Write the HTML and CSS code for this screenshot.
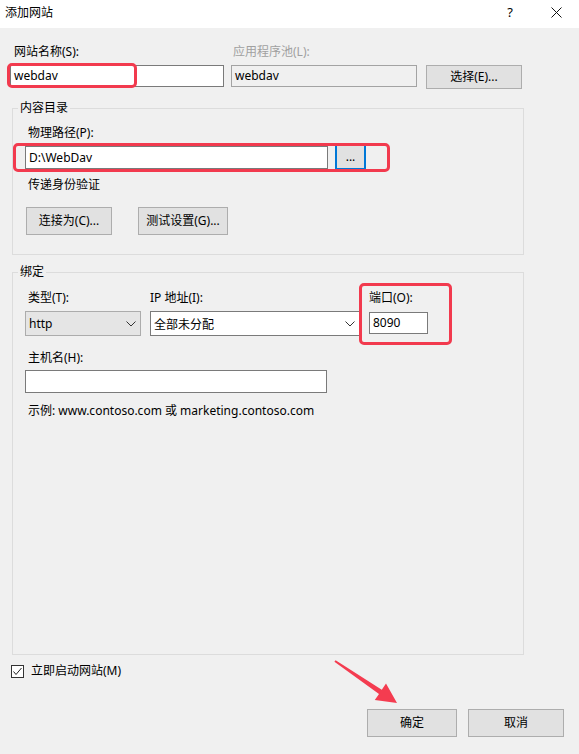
FILE: index.html
```html
<!DOCTYPE html>
<html lang="zh-CN">
<head>
<meta charset="utf-8">
<title>添加网站</title>
<link rel="stylesheet" href="styles.css">
</head>
<body>
<div class="window">
  <div class="titlebar">
    <span class="title">添加网站</span>
    <span class="tb-btn help">?</span>
    <span class="tb-btn close">
      <svg width="11" height="11" viewBox="0 0 11 11"><path d="M0.5 0.5 L10.5 10.5 M10.5 0.5 L0.5 10.5" stroke="#111" stroke-width="1" fill="none"/></svg>
    </span>
  </div>
  <div class="body">
    <div class="site-row">
      <div class="lbl lbl-name">网站名称(S):</div>
      <div class="lbl lbl-pool">应用程序池(L):</div>
      <div></div>
      <div class="input w-name">webdav</div>
      <div class="input input-disabled w-pool">webdav</div>
      <button class="btn btn-select">选择(E)...</button>
    </div>

    <fieldset class="group group-content">
      <legend>内容目录</legend>
      <div class="group-inner">
        <div class="lbl indent path-lbl">物理路径(P):</div>
        <div class="path-row">
          <div class="input w-path">D:\WebDav</div>
          <button class="btn btn-browse">...</button>
        </div>
        <div class="lbl indent pass-lbl">传递身份验证</div>
        <div class="btn-row">
          <button class="btn btn-connect">连接为(C)...</button>
          <button class="btn btn-test">测试设置(G)...</button>
        </div>
      </div>
    </fieldset>

    <fieldset class="group group-binding">
      <legend>绑定</legend>
      <div class="group-inner">
        <div class="binding-grid">
          <div class="lbl indent">类型(T):</div>
          <div class="lbl">IP 地址(I):</div>
          <div class="lbl">端口(O):</div>
          <div class="select select-gray"><span>http</span>
            <svg class="chev" width="10" height="6" viewBox="0 0 10 6"><path d="M0.5 0.5 L5 5 L9.5 0.5" stroke="#333" fill="none"/></svg>
          </div>
          <div class="select"><span>全部未分配</span>
            <svg class="chev" width="10" height="6" viewBox="0 0 10 6"><path d="M0.5 0.5 L5 5 L9.5 0.5" stroke="#333" fill="none"/></svg>
          </div>
          <div class="input w-port">8090</div>
        </div>
        <div class="lbl indent host-lbl">主机名(H):</div>
        <div class="input w-host"></div>
        <div class="lbl indent example">示例: www.contoso.com 或 marketing.contoso.com</div>
      </div>
    </fieldset>

    <div class="check-row">
      <span class="checkbox">
        <svg width="11" height="11" viewBox="0 0 11 11"><path d="M1.5 5.5 L4 8.5 L9.5 2" stroke="#222" stroke-width="1" fill="none"/></svg>
      </span>
      <span class="check-lbl">立即启动网站(M)</span>
    </div>

    <div class="footer">
      <button class="btn btn-ok">确定</button>
      <button class="btn btn-cancel">取消</button>
    </div>
  </div>

  <div class="mark mark-name"></div>
  <div class="mark mark-path"></div>
  <div class="mark mark-port"></div>
  <svg class="arrow" width="579" height="754" viewBox="0 0 579 754">
    <polygon points="335.6,660.2 381.8,689.7 386.0,683.5 397,703 374.8,700.1 379.0,693.9 334.4,661.8" fill="#f43c50"/>
  </svg>
</div>
</body>
</html>
```

FILE: styles.css
```css
* { box-sizing: border-box; }

html, body {
  margin: 0;
  padding: 0;
}

body {
  width: 579px;
  height: 754px;
  overflow: hidden;
  background: #f0f0f0;
  font-family: "Noto Sans", "Noto Sans CJK SC", sans-serif;
  font-size: 12px;
  color: #000;
}

.window {
  position: relative;
  width: 579px;
  height: 754px;
}

.titlebar {
  height: 28px;
  background: #fff;
  display: flex;
  align-items: center;
  padding-left: 5px;
}

.title {
  flex: 1;
  line-height: 16px;
  margin-top: -2px;
}

.tb-btn {
  width: 46px;
  height: 28px;
  display: flex;
  align-items: center;
  justify-content: center;
}

.help {
  font-size: 13px;
  margin-top: -4px;
}

.close {
  margin-top: -4px;
}

.body {
  padding-left: 10px;
}

.lbl {
  line-height: 16px;
  white-space: nowrap;
}

.indent { padding-left: 3px; }

.site-row {
  margin-top: 16px;
  display: grid;
  grid-template-columns: 214px 186px 98px;
  grid-template-rows: 16px auto;
  column-gap: 7px;
  row-gap: 5px;
  align-items: start;
}

.lbl-name { padding-left: 4px; }
.lbl-pool { padding-left: 2px; color: #a0a0a0; }

.input {
  height: 22px;
  border: 1px solid #7a7a7a;
  background: #fff;
  padding-left: 3px;
  line-height: 20px;
  white-space: nowrap;
}

.input-disabled {
  border-color: #a3a3a3;
  background: #f0f0f0;
}

.btn {
  font: inherit;
  color: #000;
  background: #e1e1e1;
  border: 1px solid #adadad;
  padding: 0;
  margin: 0;
  line-height: 16px;
  text-align: center;
}

.btn-select {
  width: 96px;
  height: 24px;
  margin-left: 2px;
}

.group {
  margin: 0;
  border: 1px solid #dcdcdc;
  padding: 0;
  width: 512px;
  margin-left: 2px;
  min-width: 0;
}

.group legend {
  padding: 0 2px;
  margin-left: 5px;
  line-height: 16px;
}

.group-inner {
  padding-left: 12px;
}

.group-content {
  margin-top: 11px;
  padding-bottom: 19px;
}

.path-lbl { margin-top: 9px; }

.path-row {
  margin-top: 3px;
  height: 26px;
  display: flex;
  align-items: center;
}

.w-path {
  width: 303px;
  height: 23px;
  line-height: 21px;
}

.btn-browse {
  width: 31px;
  height: 26px;
  margin-left: 7px;
  border: 2px solid #0078d7;
  line-height: 14px;
}

.pass-lbl { margin-top: 7px; }

.btn-row {
  margin-top: 14px;
  padding-left: 1px;
  display: flex;
  gap: 26px;
}

.btn-connect { width: 86px; height: 28px; }
.btn-test { width: 90px; height: 28px; }

.group-binding {
  margin-top: 9px;
  height: 391px;
}

.binding-grid {
  margin-top: 10px;
  display: grid;
  grid-template-columns: 116px 210px 59px;
  grid-template-rows: 16px auto;
  column-gap: 9px;
  row-gap: 5px;
  align-items: start;
}

.select {
  height: 25px;
  border: 1px solid #7a7a7a;
  background: #fff;
  display: flex;
  align-items: center;
  justify-content: space-between;
  padding: 0 4px 0 3px;
  white-space: nowrap;
}

.select-gray {
  background: #e5e5e5;
  border-color: #acacac;
}

.chev { display: block; }

.w-port {
  margin-top: 1px;
  height: 22px;
}

.host-lbl { margin-top: 14px; }

.w-host {
  margin-top: 4px;
  width: 302px;
  height: 23px;
}

.example { margin-top: 10px; }

.check-row {
  margin-top: 8px;
  display: flex;
  align-items: center;
  height: 16px;
  padding-left: 1px;
}

.checkbox {
  width: 13px;
  height: 13px;
  border: 1px solid #333;
  background: #fff;
  display: flex;
  align-items: center;
  justify-content: center;
}

.check-lbl {
  margin-left: 7px;
  line-height: 16px;
}

.footer {
  margin-top: 30px;
  display: flex;
  justify-content: flex-end;
  gap: 11px;
  padding-right: 15px;
}

.btn-ok { width: 90px; height: 28px; }
.btn-cancel { width: 96px; height: 28px; }

.mark {
  position: absolute;
  border: 3px solid #f23a4e;
  border-radius: 5px;
}

.mark-name { left: 7px; top: 63px; width: 130px; height: 25px; }
.mark-path { left: 13px; top: 143px; width: 377px; height: 29px; }
.mark-port { left: 359px; top: 283px; width: 93px; height: 62px; }

.arrow {
  position: absolute;
  left: 0;
  top: 0;
  pointer-events: none;
}
```
